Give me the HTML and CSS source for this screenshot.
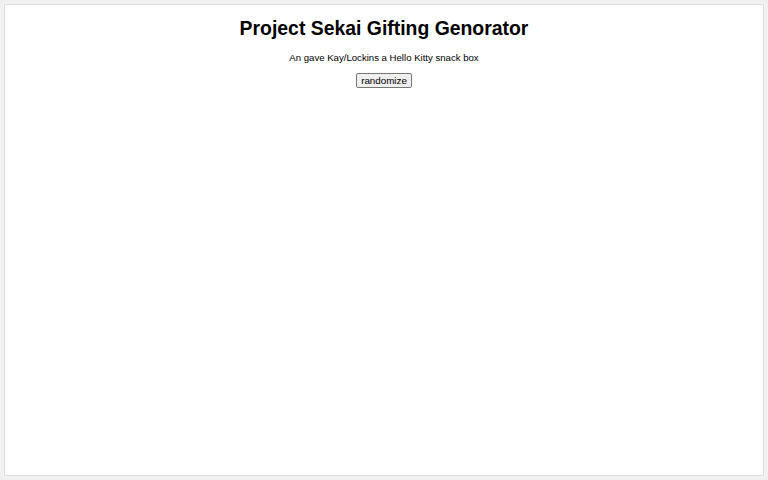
FILE: index.html
```html
<!DOCTYPE html>
<html lang="en">
<head>
  <meta charset="UTF-8">
  <title>Project Sekai Gifting Genorator</title>
  <link rel="stylesheet" href="styles.css">
</head>
<body>
  <div class="page">
    <h1>Project Sekai Gifting Genorator</h1>
    <p id="result">An gave Kay/Lockins a Hello Kitty snack box</p>
    <button id="randomize">randomize</button>
  </div>
</body>
</html>
```

FILE: styles.css
```css
html, body {
  height: 100%;
}
body {
  margin: 0;
  padding: 4px;
  box-sizing: border-box;
  background-color: #f2f2f2;
  font-family: "Liberation Sans", Arial, sans-serif;
}
.page {
  height: 100%;
  box-sizing: border-box;
  background: #fff;
  border: 1px solid #dcdcdc;
  text-align: center;
  padding-top: 11px;
}
h1 {
  margin: 0;
  font-size: 19.4px;
  line-height: 24px;
  color: #000;
}
p {
  margin: 12px 0 0;
  font-size: 9.6px;
  line-height: 12px;
}
button {
  margin-top: 9px;
  font-family: "Liberation Sans", Arial, sans-serif;
  font-size: 9.8px;
  padding: 1px 4px;
  background: #efefef;
  border: 1px solid #767676;
  border-radius: 2px;
  color: #000;
}
```
